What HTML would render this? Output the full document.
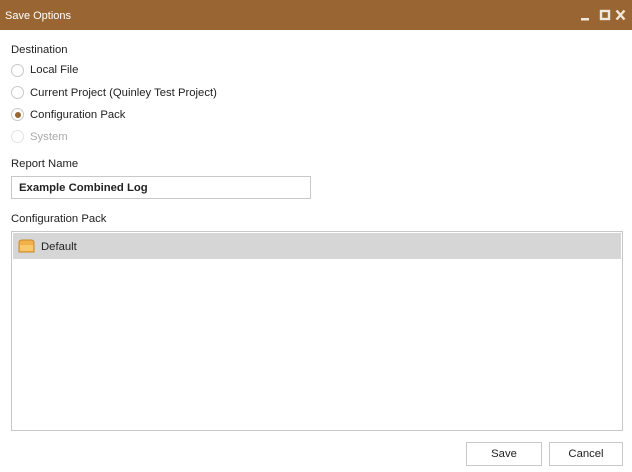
<!DOCTYPE html>
<html><head><meta charset="utf-8"><style>
*{margin:0;padding:0;box-sizing:border-box}
body{width:632px;height:472px;background:#fff;font-family:"Liberation Sans",sans-serif;font-size:11.3px;color:#222;position:relative;overflow:hidden}
.t{position:absolute;white-space:nowrap;line-height:14px}
.title{position:absolute;left:0;top:0;width:632px;height:30px;background:#996633;color:#fff}
.r{position:absolute;left:11px;width:13px;height:13px;border:1px solid #c8c8c8;border-radius:50%;background:#fff}
.btn{position:absolute;top:442px;height:24px;border:1px solid #c8c8c8;background:#fff;text-align:center;line-height:22px}
</style></head><body>
<div class="title"><div class="t" style="left:5px;top:9px;font-size:11px">Save Options</div>
<svg style="position:absolute;left:578px;top:8px" width="52" height="14" viewBox="0 0 52 14">
<rect x="3" y="10" width="8" height="2.5" fill="#f0e6da"/>
<rect x="23" y="3" width="8" height="8" fill="none" stroke="#f0e6da" stroke-width="2.4"/>
<path d="M38.5 2.5 L46.5 11.5 M46.5 2.5 L38.5 11.5" stroke="#f0e6da" stroke-width="2.4"/>
</svg></div>
<div class="t" style="left:11px;top:43px">Destination</div>
<div class="r" style="top:64px"></div><div class="t" style="left:30px;top:63px">Local File</div>
<div class="r" style="top:86px"></div><div class="t" style="left:30px;top:86px">Current Project (Quinley Test Project)</div>
<div class="r" style="top:108px"><div style="position:absolute;left:2.5px;top:2.5px;width:6px;height:6px;border-radius:50%;background:#996633"></div></div><div class="t" style="left:30px;top:108px">Configuration Pack</div>
<div class="r" style="top:130px;border-color:#e2e2e2"></div><div class="t" style="left:30px;top:130px;color:#aaa">System</div>
<div class="t" style="left:11px;top:157px">Report Name</div>
<div style="position:absolute;left:11px;top:176px;width:300px;height:23px;border:1px solid #c8c8c8"></div>
<div class="t" style="left:19px;top:181px;font-weight:bold;color:#222">Example Combined Log</div>
<div class="t" style="left:11px;top:212px">Configuration Pack</div>
<div style="position:absolute;left:11px;top:231px;width:612px;height:200px;border:1px solid #c8c8c8"></div>
<div style="position:absolute;left:13px;top:233px;width:608px;height:26px;background:#d6d6d6"></div>
<svg style="position:absolute;left:18px;top:239px" width="17" height="14" viewBox="0 0 17 14">
<path d="M1 4 Q1 1 4 1 L13 1 Q16 1 16 4 L16 13 L1 13 Z" fill="#f2b04a" stroke="#c98a2c"/>
<rect x="2" y="6" width="13" height="6" fill="#f8c86a"/>
</svg>
<div class="t" style="left:41px;top:240px">Default</div>
<div class="btn" style="left:466px;width:76px">Save</div>
<div class="btn" style="left:549px;width:74px">Cancel</div>
</body></html>
